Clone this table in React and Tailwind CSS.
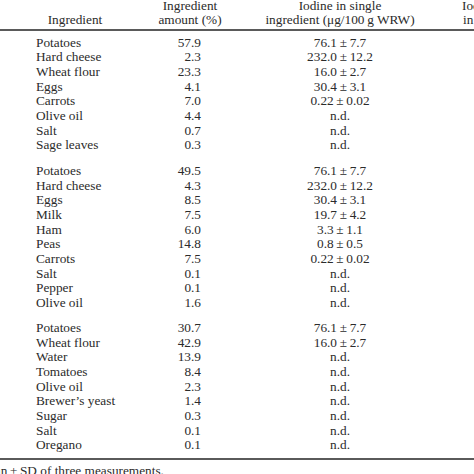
import React from "react";

const T = "\u2009\u00b1\u2009";

const groups = [
  [
    ["Potatoes", "57.9", `76.1${T}7.7`],
    ["Hard cheese", "2.3", `232.0${T}12.2`],
    ["Wheat flour", "23.3", `16.0${T}2.7`],
    ["Eggs", "4.1", `30.4${T}3.1`],
    ["Carrots", "7.0", `0.22${T}0.02`],
    ["Olive oil", "4.4", "n.d."],
    ["Salt", "0.7", "n.d."],
    ["Sage leaves", "0.3", "n.d."],
  ],
  [
    ["Potatoes", "49.5", `76.1${T}7.7`],
    ["Hard cheese", "4.3", `232.0${T}12.2`],
    ["Eggs", "8.5", `30.4${T}3.1`],
    ["Milk", "7.5", `19.7${T}4.2`],
    ["Ham", "6.0", `3.3${T}1.1`],
    ["Peas", "14.8", `0.8${T}0.5`],
    ["Carrots", "7.5", `0.22${T}0.02`],
    ["Salt", "0.1", "n.d."],
    ["Pepper", "0.1", "n.d."],
    ["Olive oil", "1.6", "n.d."],
  ],
  [
    ["Potatoes", "30.7", `76.1${T}7.7`],
    ["Wheat flour", "42.9", `16.0${T}2.7`],
    ["Water", "13.9", "n.d."],
    ["Tomatoes", "8.4", "n.d."],
    ["Olive oil", "2.3", "n.d."],
    ["Brewer\u2019s yeast", "1.4", "n.d."],
    ["Sugar", "0.3", "n.d."],
    ["Salt", "0.1", "n.d."],
    ["Oregano", "0.1", "n.d."],
  ],
];

const gaps = ["mt-[4.7px]", "mt-[11px]", "mt-[10.5px]"];

export default function App() {
  return (
    <div
      className="w-[474px] h-[474px] overflow-hidden bg-white text-[#2b2b2b] text-[13.3px] leading-[14.66px]"
      style={{ fontFamily: '"Liberation Serif", "Times New Roman", serif' }}
    >
      {/* Header */}
      <div className="flex whitespace-nowrap">
        <div className="w-[36px] shrink-0" />
        <div className="w-[78px] shrink-0 flex flex-col justify-end text-center">
          <div className="leading-[16px]">Ingredient</div>
        </div>
        <div className="w-[36px] shrink-0" />
        <div className="w-[80px] shrink-0 text-center">
          <div className="leading-[12px]">Ingredient</div>
          <div className="leading-[16px]">amount (%)</div>
        </div>
        <div className="w-[30px] shrink-0" />
        <div className="w-[160px] shrink-0 text-center">
          <div className="leading-[12px]">Iodine in single</div>
          <div className="leading-[16px]">ingredient (μg/100{"\u2009"}g WRW)</div>
        </div>
        <div className="w-[42px] shrink-0" />
        <div className="shrink-0">
          <div className="leading-[12px]">Iodine in</div>
          <div className="leading-[16px] pl-[1px]">in</div>
        </div>
      </div>
      <div className="mt-[1px] h-[2px] bg-[#5a5a5a]" />

      {groups.map((g, gi) => (
        <div key={gi} className={gaps[gi]}>
          {g.map((r, ri) => (
            <div
              key={ri}
              className="grid grid-cols-[36px_115px_50px_59px_160px] whitespace-nowrap"
            >
              <div />
              <div>{r[0]}</div>
              <div className="text-right">{r[1]}</div>
              <div />
              <div className="text-center">{r[2]}</div>
            </div>
          ))}
        </div>
      ))}

      <div className="mt-[5px] h-[2px] bg-[#5a5a5a]" />
      <div className="mt-[4px] ml-[-23px] whitespace-nowrap">
        Mean{"\u2009"}±{"\u2009"}SD of three measurements.
      </div>
    </div>
  );
}
